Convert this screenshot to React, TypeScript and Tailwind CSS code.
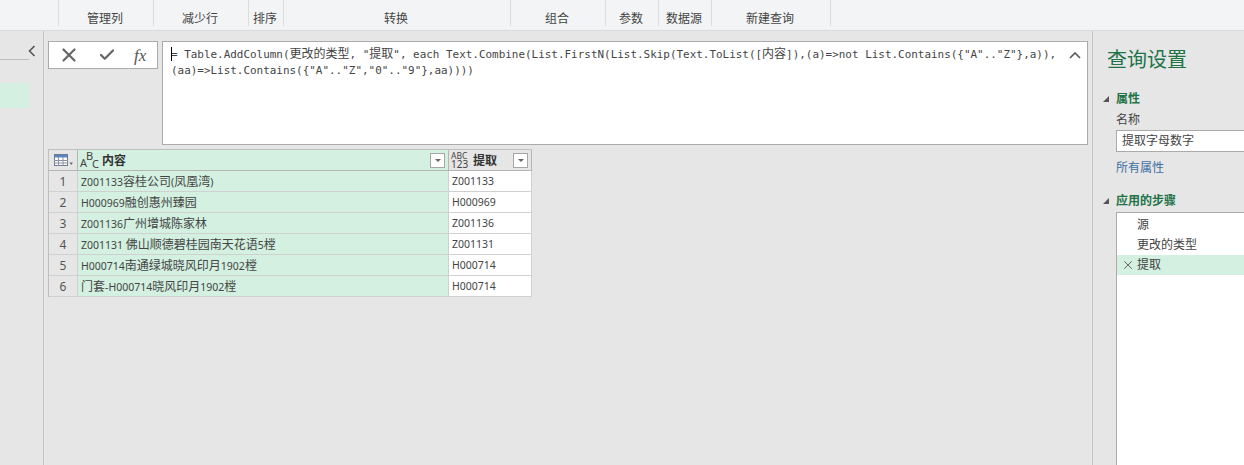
import { ReactNode } from "react"
import { X, Check } from "lucide-react"

const ribbonGroups = [
  { label: "", width: 59 },
  { label: "管理列", width: 95 },
  { label: "减少行", width: 95 },
  { label: "排序", width: 35 },
  { label: "转换", width: 227 },
  { label: "组合", width: 95 },
  { label: "参数", width: 53 },
  { label: "数据源", width: 53 },
  { label: "新建查询", width: 119 },
]

const rows = [
  { id: 1, content: "Z001133容桂公司(凤凰湾)", code: "Z001133" },
  { id: 2, content: "H000969融创惠州臻园", code: "H000969" },
  { id: 3, content: "Z001136广州增城陈家林", code: "Z001136" },
  { id: 4, content: "Z001131 佛山顺德碧桂园南天花语5樘", code: "Z001131" },
  { id: 5, content: "H000714南通绿城晓风印月1902樘", code: "H000714" },
  { id: 6, content: "门套-H000714晓风印月1902樘", code: "H000714" },
]

// latin runs are narrower than the CJK ones in the source font, so size them apart
function Mixed({ text, cjk = "text-[12px]" }: { text: string; cjk?: string }) {
  const parts: ReactNode[] = text.split(/([\u4e00-\u9fff]+)/).map((part, i) =>
    i % 2 === 1 ? (
      <span key={i} className={cjk}>
        {part}
      </span>
    ) : (
      part
    )
  )
  return <>{parts}</>
}

function FilterButton() {
  return (
    <div className="flex h-[15px] w-[15px] items-center justify-center border border-[#a6a6a6] bg-white">
      <div className="h-0 w-0 border-x-[3px] border-t-[3px] border-x-transparent border-t-[#666]" />
    </div>
  )
}

function SectionHead({ title }: { title: string }) {
  return (
    <div className="flex h-[18px] items-center font-bold text-[12px] text-[#217346]">
      <svg width="6" height="6" viewBox="0 0 6 6" className="ml-[-13px]">
        <path d="M0 6 L6 6 L6 0 Z" fill="#555" />
      </svg>
      <span className="ml-[7px]">{title}</span>
    </div>
  )
}

function TableIcon() {
  return (
    <svg width="20" height="12" viewBox="0 0 20 12">
      <rect x="0.5" y="0.5" width="13" height="11" fill="#fff" stroke="#6b7a90" />
      <rect x="1" y="1" width="12" height="2.5" fill="#5b86c0" />
      <path d="M0 6.5H14M0 9H14M4.5 3V12M9 3V12" stroke="#8a94a3" strokeWidth="1" />
      <path d="M15.5 8.5H19L17.25 11Z" fill="#666" />
    </svg>
  )
}

export default function App() {
  return (
    <div
      className="flex h-[465px] w-[1244px] flex-col overflow-hidden bg-[#e6e6e6] text-[#444]"
      style={{ fontFamily: '"Noto Sans", "Noto Sans CJK SC", sans-serif' }}
    >
      {/* ribbon */}
      <div className="flex h-[31px] shrink-0 border-b border-[#d9d9d9] bg-[#f3f4f6] pb-[4px]">
        {ribbonGroups.map((g, i) => (
          <div
            key={i}
            className="flex items-end justify-center border-r border-[#dcdcdc] pr-[2px] text-[12px] leading-[14px] text-[#444]"
            style={{ width: g.width }}
          >
            {g.label}
          </div>
        ))}
      </div>

      <div className="flex min-h-0 flex-1">
        {/* collapsed queries pane */}
        <div className="w-[44px] shrink-0 border-r border-[#c6c6c6] pt-[11px]">
          <div className="flex h-[17px] w-[36px] items-center justify-end">
            <svg width="8" height="12" viewBox="0 0 8 12">
              <path d="M6.5 1 L1.5 6 L6.5 11" fill="none" stroke="#555" strokeWidth="1.6" />
            </svg>
          </div>
          <div className="h-px w-[29px] bg-[#bdbdbd]" />
          <div className="mt-[23px] h-[25px] w-[29px] bg-[#d3f0e0]" />
        </div>

        {/* main */}
        <div className="min-w-0 flex-1 pl-[4px] pr-[4px] pt-[10px]">
          <div className="flex gap-[4px]">
            <div className="flex h-[28px] w-[110px] items-center border border-[#ababab] bg-white">
              <X size={22} strokeWidth={2.4} className="ml-[9px] text-[#666]" />
              <Check size={18} strokeWidth={3} className="ml-[18px] text-[#666]" />
              <span
                className="ml-[18px] text-[17px] italic leading-none text-[#555]"
                style={{ fontFamily: '"Liberation Serif", serif' }}
              >
                fx
              </span>
            </div>
            <div
              className="relative h-[104px] w-[926px] border border-[#ababab] bg-white pl-[8px] pt-[4px] text-[10.95px] leading-[16px] text-[#444]"
              style={{ fontFamily: '"DejaVu Sans Mono", "Noto Sans CJK SC", monospace' }}
            >
              <div className="whitespace-pre">
                <span className="absolute left-[8px] top-[5px] h-[14px] w-px bg-black" />
                <Mixed
                  text={'= Table.AddColumn(更改的类型, "提取", each Text.Combine(List.FirstN(List.Skip(Text.ToList([内容]),(a)=>not List.Contains({"A".."Z"},a)),'}
                />
              </div>
              <div className="whitespace-pre">
                <Mixed text={'(aa)=>List.Contains({"A".."Z","0".."9"},aa))))'} />
              </div>
              <svg width="12" height="7" viewBox="0 0 12 7" className="absolute right-[6px] top-[10px]">
                <path d="M1 6 L6 1 L11 6" fill="none" stroke="#555" strokeWidth="1.6" />
              </svg>
            </div>
          </div>

          {/* data grid */}
          <div className="mt-[4px] grid w-[484px] grid-cols-[29px_371px_83px] border-l border-t border-[#bfbfbf] text-[10.5px] leading-[21px]">
            <div className="flex h-[21px] items-center border-b border-r border-[#b5b5b5] bg-[#e6e6e6] pl-[5px]">
              <TableIcon />
            </div>
            <div className="flex h-[21px] items-center border-b border-r border-[#b5b5b5] bg-[#d3f0e0] pl-[2px] pr-[3px]">
              <span className="relative h-[18px] w-[20px] shrink-0 text-[11px] leading-none text-[#444]">
                <span className="absolute left-0 top-[6px]">A</span>
                <span className="absolute left-[6px] top-[-1px]">B</span>
                <span className="absolute left-[12px] top-[7px]">C</span>
              </span>
              <span className="ml-[2px] flex-1 text-[12px] font-bold text-[#333]">内容</span>
              <FilterButton />
            </div>
            <div className="flex h-[21px] items-center border-b border-r border-[#b5b5b5] bg-[#e6e6e6] pl-[2px] pr-[3px]">
              <span className="w-[17px] shrink-0 text-[8.5px] leading-[9px] text-[#444]">
                ABC
                <br />
                <span className="text-[10px]">123</span>
              </span>
              <span className="ml-[5px] flex-1 text-[12px] font-bold text-[#333]">提取</span>
              <FilterButton />
            </div>
            {rows.map((r) => (
              <div key={r.id} className="contents">
                <div className="flex h-[21px] items-center justify-center border-b border-r border-[#d0d0d0] bg-[#e6e6e6] text-[12px] text-[#555]">
                  {r.id}
                </div>
                <div className="h-[21px] whitespace-nowrap border-b border-r border-[#d0d0d0] bg-[#d3f0e0] pl-[3px]">
                  <Mixed text={r.content} />
                </div>
                <div className="h-[21px] border-b border-r border-[#d0d0d0] bg-white pl-[3px]">{r.code}</div>
              </div>
            ))}
          </div>
        </div>

        {/* query settings */}
        <div className="w-[152px] shrink-0 overflow-hidden border-l border-[#c6c6c6] pl-[14px] pt-[14px]">
          <div className="h-[30px] text-[20px] leading-[30px] text-[#217346]">查询设置</div>
          <div className="ml-[9px] mt-[15px] w-[200px]">
            <SectionHead title="属性" />
            <div className="mt-[3px] h-[18px] text-[12px] leading-[18px]">名称</div>
            <div className="mt-[1px] h-[22px] border border-[#ababab] bg-white pl-[5px] text-[12px] leading-[20px]">
              提取字母数字
            </div>
            <div className="mt-[7px] h-[18px] text-[12px] leading-[18px] text-[#3e6ea3]">所有属性</div>
            <div className="mt-[15px]">
              <SectionHead title="应用的步骤" />
            </div>
            <div className="mt-[2px] h-[300px] border border-[#ababab] bg-white pt-[2px] text-[12px] leading-[20px]">
              <div className="h-[20px] pl-[20px]">源</div>
              <div className="h-[20px] pl-[20px]">更改的类型</div>
              <div className="flex h-[20px] items-center bg-[#d3f0e0]">
                <X size={14} strokeWidth={1.5} className="ml-[4px] text-[#555]" />
                <span className="ml-[2px]">提取</span>
              </div>
            </div>
          </div>
        </div>
      </div>
    </div>
  )
}
